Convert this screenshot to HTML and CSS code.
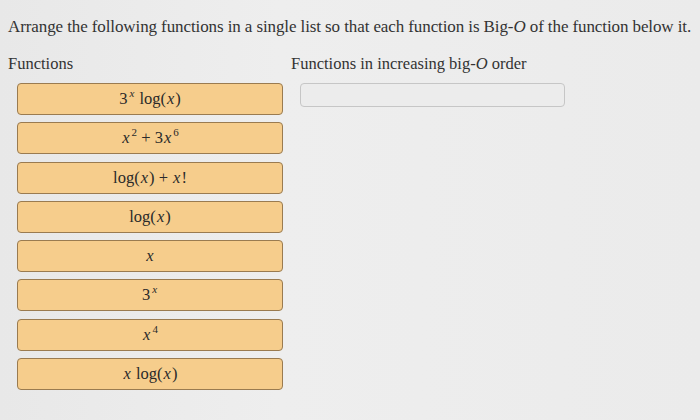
FILE: index.html
```html
<!DOCTYPE html>
<html lang="en">
<head>
  <meta charset="UTF-8">
  <title>Big-O ordering</title>
  <link rel="stylesheet" href="styles.css">
</head>
<body>
  <div class="question">
    <p class="prompt">Arrange the following functions in a single list so that each function is Big-<i>O</i> of the function below it.</p>

    <div class="columns">
      <div class="col">
        <h2>Functions</h2>
        <ul class="items">
          <li class="item"><span class="math">3<sup><i>x</i></sup> log(<i>x</i>)</span></li>
          <li class="item"><span class="math"><i>x</i><sup>2</sup> + 3<i>x</i><sup>6</sup></span></li>
          <li class="item"><span class="math">log(<i>x</i>) + <i>x</i>!</span></li>
          <li class="item"><span class="math">log(<i>x</i>)</span></li>
          <li class="item"><span class="math"><i>x</i></span></li>
          <li class="item"><span class="math">3<sup><i>x</i></sup></span></li>
          <li class="item"><span class="math"><i>x</i><sup>4</sup></span></li>
          <li class="item"><span class="math"><i>x</i> log(<i>x</i>)</span></li>
        </ul>
      </div>
      <div class="col">
        <h2>Functions in increasing big-<i>O</i> order</h2>
        <ul class="items">
          <li class="slot"></li>
        </ul>
      </div>
    </div>
  </div>
</body>
</html>
```

FILE: styles.css
```css
/* Base */
* { box-sizing: border-box; margin: 0; padding: 0; }
body {
  font-family: 'Liberation Serif', serif;
  color: #333;
  background: linear-gradient(90deg, #e8e8e8 0%, #eeeeee 40%, #ebebeb 100%);
  width: 700px;
  height: 420px;
  overflow: hidden;
}

.question { padding: 17px 8px 0 8px; }

.prompt {
  font-size: 17px;
  letter-spacing: -0.1px;
  line-height: 20px;
  white-space: nowrap;
}

/* Two columns */
.columns {
  display: grid;
  grid-template-columns: 283px 1fr;
  margin-top: 17px;
}

.col h2 {
  font-size: 16.5px;
  font-weight: normal;
  line-height: 20px;
}

.items {
  list-style: none;
  padding-left: 9px;
  margin-top: 9px;
  display: flex;
  flex-direction: column;
  gap: 7.3px;
}

/* Draggable function cards */
.item {
  width: 266px;
  height: 32px;
  background: #f6cd8c;
  border: 1.5px solid #9a7b50;
  border-radius: 4px;
  text-align: center;
  line-height: 29px;
  font-size: 16.5px;
  color: #2a2a2a;
}
.math sup {
  font-size: 11px;
  line-height: 0;
  vertical-align: 7px;
  margin-left: 1px;
}
.math i { margin: 0 1px; }

/* Drop target */
.slot {
  width: 265px;
  height: 24px;
  border: 1.5px solid #c6c6c6;
  border-radius: 4px;
  background: #ececec;
}
```
